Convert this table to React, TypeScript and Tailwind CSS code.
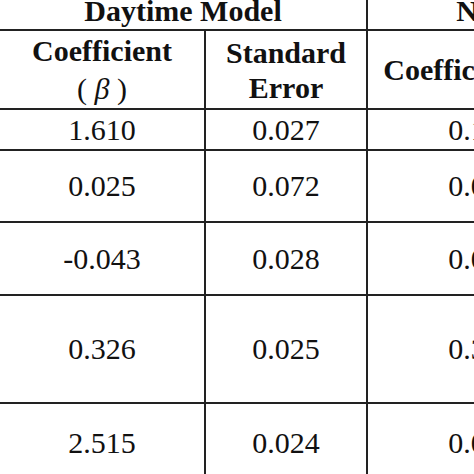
const rows = [
  { h: "h-[41px]", a: "1.610", b: "0.027", c: "0.176", d: "0.029" },
  { h: "h-[72px]", a: "0.025", b: "0.072", c: "0.061", d: "0.068" },
  { h: "h-[73px]", a: "-0.043", b: "0.028", c: "0.047", d: "0.030" },
  { h: "h-[108px]", a: "0.326", b: "0.025", c: "0.318", d: "0.027" },
  { h: "h-[80px]", a: "2.515", b: "0.024", c: "0.062", d: "0.026" },
];

function Beta() {
  return (
    <span className="font-normal">
      (&nbsp;<span className="italic">β</span>&nbsp;)
    </span>
  );
}

export default function App() {
  const cell = "border-2 border-[#222] text-center align-middle p-0";
  return (
    <div className="w-[474px] h-[474px] overflow-hidden bg-white [font-family:'Liberation_Serif','Times_New_Roman',serif] text-[30px] text-[#111]">
      <table className="-mt-[7px] table-fixed border-collapse w-[763px]">
        <colgroup>
          <col className="w-[205px]" />
          <col className="w-[162px]" />
          <col className="w-[230px]" />
          <col className="w-[166px]" />
        </colgroup>
        <thead>
          <tr className="h-[37px] font-bold leading-[34px]">
            <th colSpan={2} className={cell + " border-l-0 border-t-0"}>
              Daytime Model
            </th>
            <th colSpan={2} className={cell + " border-t-0"}>
              Nighttime Model
            </th>
          </tr>
          <tr className="h-[79px] font-bold leading-[35px]">
            <th className={cell + " border-l-0 leading-[38px]"}>
              Coefficient
              <br />
              <Beta />
            </th>
            <th className={cell}>
              Standard
              <br />
              Error
            </th>
            <th className={cell}>
              Coefficient <Beta />
            </th>
            <th className={cell}>
              Standard
              <br />
              Error
            </th>
          </tr>
        </thead>
        <tbody className="leading-[34px]">
          {rows.map((r, i) => (
            <tr key={i} className={r.h}>
              <td className={cell + " border-l-0"}>{r.a}</td>
              <td className={cell}>{r.b}</td>
              <td className={cell}>{r.c}</td>
              <td className={cell}>{r.d}</td>
            </tr>
          ))}
        </tbody>
      </table>
    </div>
  );
}
